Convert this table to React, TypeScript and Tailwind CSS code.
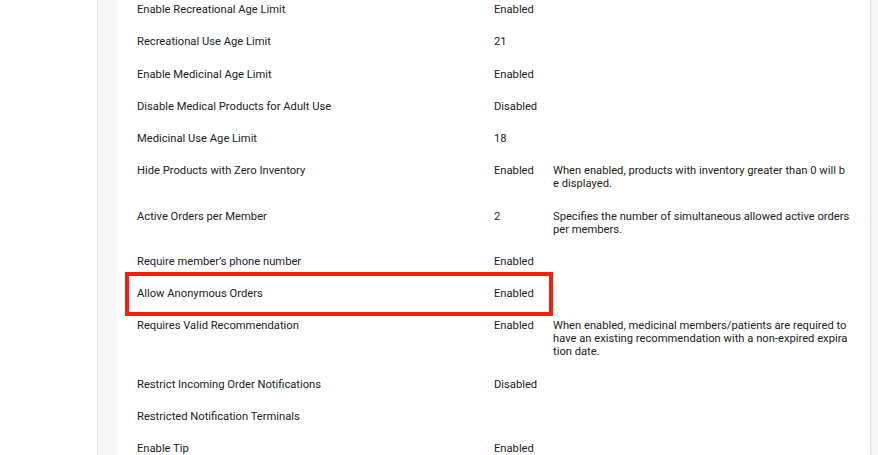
const rows: { label: string; value?: string; desc?: string; highlight?: boolean }[] = [
  { label: 'Enable Recreational Age Limit', value: 'Enabled' },
  { label: 'Recreational Use Age Limit', value: '21' },
  { label: 'Enable Medicinal Age Limit', value: 'Enabled' },
  { label: 'Disable Medical Products for Adult Use', value: 'Disabled' },
  { label: 'Medicinal Use Age Limit', value: '18' },
  {
    label: 'Hide Products with Zero Inventory',
    value: 'Enabled',
    desc: 'When enabled, products with inventory greater than 0 will be displayed.',
  },
  {
    label: 'Active Orders per Member',
    value: '2',
    desc: 'Specifies the number of simultaneous allowed active orders per members.',
  },
  { label: 'Require member\u2019s phone number', value: 'Enabled' },
  { label: 'Allow Anonymous Orders', value: 'Enabled', highlight: true },
  {
    label: 'Requires Valid Recommendation',
    value: 'Enabled',
    desc: 'When enabled, medicinal members/patients are required to have an existing recommendation with a non-expired expiration date.',
  },
  { label: 'Restrict Incoming Order Notifications', value: 'Disabled' },
  { label: 'Restricted Notification Terminals' },
  { label: 'Enable Tip', value: 'Enabled' },
];

export default function App() {
  return (
    <div className="h-[455px] w-[878px] overflow-hidden bg-white font-['Roboto',sans-serif] text-[11.2px] leading-[13px] text-[#212121]">
      <div className="ml-[97px] flex h-full border-l border-[#e3e3e3] bg-[#f7f7f7] pl-[19px] pr-[8px]">
        <div className="h-full flex-1 bg-white shadow-[1px_0_2px_rgba(0,0,0,0.12)]">
          <div className="-mt-[7px] px-[20px]">
            {rows.map((r) => (
              <div key={r.label} className="relative flex pt-[10px] pb-[9.25px]">
                {/* annotation box drawn over the row */}
                {r.highlight && (
                  <div className="pointer-events-none absolute -top-[5px] -bottom-[7px] left-[-12px] w-[428px] border-[4px] border-[#f51f0f]" />
                )}
                <div className="w-[357px] shrink-0">{r.label}</div>
                <div className="w-[59px] shrink-0">{r.value}</div>
                <div className="w-[297px] break-all">{r.desc}</div>
              </div>
            ))}
          </div>
        </div>
      </div>
    </div>
  );
}
